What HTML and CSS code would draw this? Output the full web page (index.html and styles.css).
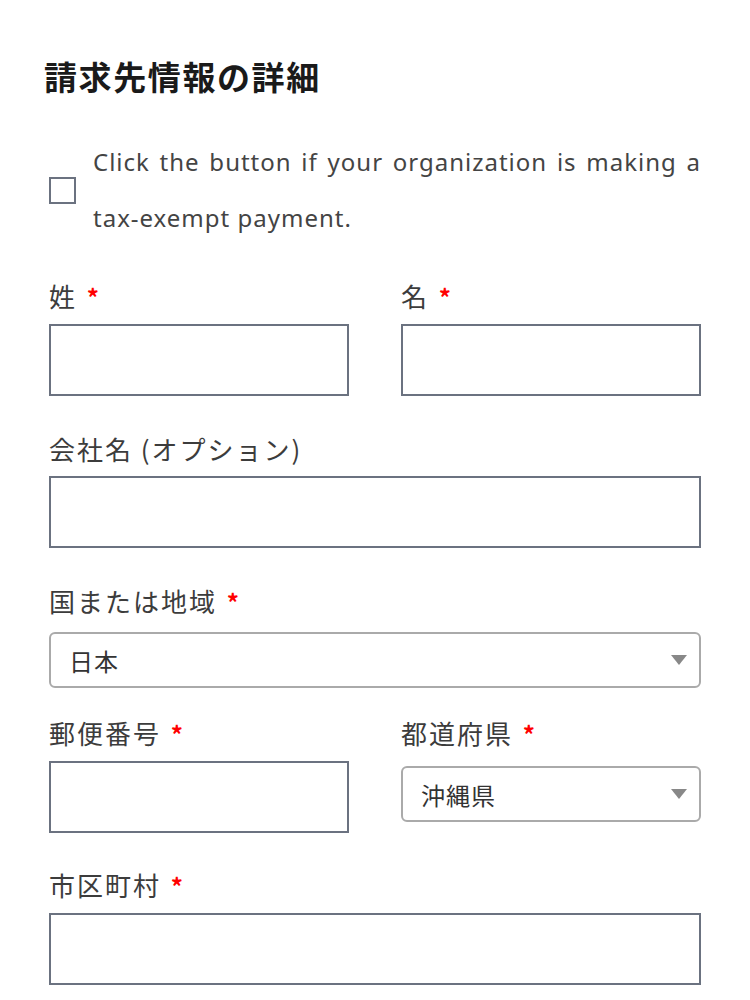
FILE: index.html
```html
<!DOCTYPE html>
<html lang="ja">
<head>
<meta charset="utf-8">
<link rel="stylesheet" href="styles.css">
</head>
<body>
<div class="page">
  <h2 class="title">請求先情報の詳細</h2>
  <div class="exempt">
    <span class="checkbox"></span>
    <p class="exempt-text">Click the button if your organization is making a <span class="nowrap">tax-exempt</span> payment.</p>
  </div>

  <div class="row two">
    <div class="field">
      <label class="label">姓 <span class="req">*</span></label>
      <div class="input"></div>
    </div>
    <div class="field">
      <label class="label">名 <span class="req">*</span></label>
      <div class="input"></div>
    </div>
  </div>

  <div class="row">
    <div class="field">
      <label class="label">会社名 (オプション)</label>
      <div class="input"></div>
    </div>
  </div>

  <div class="row row-select">
    <div class="field">
      <label class="label">国または地域 <span class="req">*</span></label>
      <div class="select"><span>日本</span><span class="caret"></span></div>
    </div>
  </div>

  <div class="row two row-after-select">
    <div class="field">
      <label class="label">郵便番号 <span class="req">*</span></label>
      <div class="input"></div>
    </div>
    <div class="field">
      <label class="label">都道府県 <span class="req">*</span></label>
      <div class="select select-inline"><span>沖縄県</span><span class="caret"></span></div>
    </div>
  </div>

  <div class="row row-last">
    <div class="field">
      <label class="label">市区町村 <span class="req">*</span></label>
      <div class="input"></div>
    </div>
  </div>
</div>
</body>
</html>
```

FILE: styles.css
```css
html, body {
  margin: 0;
  padding: 0;
  background: #ffffff;
}
body {
  font-family: "Noto Sans CJK JP", "Noto Sans", sans-serif;
  color: #333333;
}
.page {
  padding: 50px 49px 0 49px;
}
.title {
  margin: 0 0 0 -5px;
  font-size: 33px;
  line-height: 52px;
  font-weight: 700;
  letter-spacing: 1.6px;
  color: #1a1a1a;
}
.exempt {
  display: flex;
  align-items: center;
  gap: 17px;
  margin-top: 32px;
}
.checkbox {
  flex: 0 0 auto;
  width: 23px;
  height: 23px;
  border: 2px solid #6b7280;
  background: #fff;
}
.exempt-text {
  margin: 0;
  font-family: "Noto Sans", "Noto Sans CJK JP", sans-serif;
  font-size: 24px;
  line-height: 56px;
  letter-spacing: 1px;
  text-align: justify;
  color: #444444;
}
.nowrap {
  white-space: nowrap;
}
.row {
  margin-top: 32px;
}
.row + .row {
  margin-top: 35px;
}
.row.two {
  display: grid;
  grid-template-columns: 1fr 1fr;
  column-gap: 52px;
}
.row + .row-after-select {
  margin-top: 27px;
}
.row + .row-last {
  margin-top: 34px;
}
.label {
  display: block;
  font-size: 26px;
  line-height: 36px;
  letter-spacing: 2px;
  color: #3c3c3c;
  margin-bottom: 9px;
}
.req {
  color: #ff0000;
  font-weight: 700;
  font-size: 24px;
  margin-left: 2px;
}
.input {
  box-sizing: border-box;
  height: 72px;
  border: 2px solid #6b7280;
  background: #fff;
}
.select {
  box-sizing: border-box;
  height: 56px;
  margin-top: 12px;
  border: 2px solid #aaaaaa;
  border-radius: 6px;
  background: #fff;
  display: flex;
  align-items: center;
  justify-content: space-between;
  padding: 0 12px 0 18px;
  font-size: 24px;
  letter-spacing: 1px;
  color: #333333;
}
.select.select-inline {
  margin-top: 14px;
}
.caret {
  width: 0;
  height: 0;
  border-left: 8px solid transparent;
  border-right: 8px solid transparent;
  border-top: 10px solid #888888;
}
```
